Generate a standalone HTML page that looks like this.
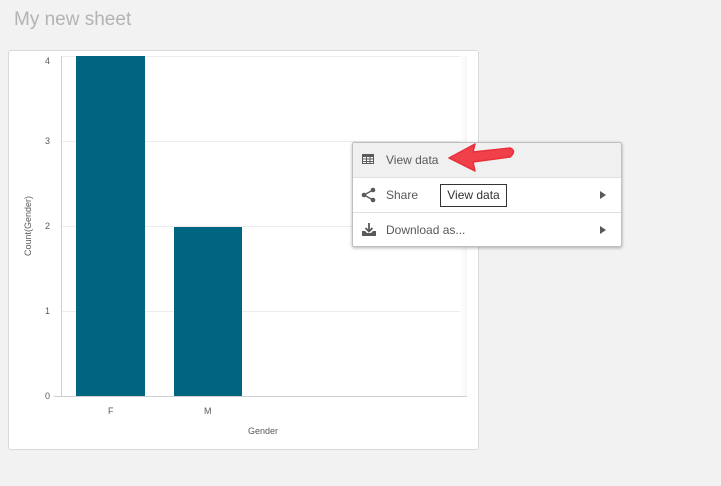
<!DOCTYPE html>
<html><head><style>
*{margin:0;padding:0;box-sizing:border-box}
body{width:721px;height:486px;background:#f2f2f2;font-family:"Liberation Sans",sans-serif;position:relative;overflow:hidden}
.t{position:absolute;left:14px;top:9px;font-size:19px;color:#b3b3b3}
.card{position:absolute;left:8px;top:50px;width:471px;height:400px;background:#fff;border:1px solid #d9d9d9;border-radius:3px}
.a{position:absolute;font-size:9px;color:#595959}
.g{position:absolute;left:61px;width:406px;height:1px;background:#ececec}
.bar{position:absolute;background:#006580}
.menu{position:absolute;left:352px;top:142px;width:270px;height:105px;background:#fff;border:1px solid #bfbfbf;border-radius:2px;box-shadow:0 1px 3px rgba(0,0,0,.3)}
.row{position:absolute;left:0;width:268px;height:34px;font-size:12px;color:#595959;line-height:34px;padding-left:33px}
.row.s{border-top:1px solid #e0e0e0}
.tri{position:absolute;right:15px;top:13px;width:0;height:0;border-left:6px solid #595959;border-top:4px solid transparent;border-bottom:4px solid transparent}
.ic{position:absolute;left:8px;top:9px}
</style></head><body>
<div class="t">My new sheet</div>
<div class="card"></div>
<div class="g" style="top:56px"></div>
<div class="g" style="top:141px"></div>
<div class="g" style="top:226px"></div>
<div class="g" style="top:311px"></div>
<div style="position:absolute;left:460px;top:56px;width:7px;height:340px;background:linear-gradient(90deg,#fff,#f6f6f6)"></div>
<div style="position:absolute;left:61px;top:56px;width:1px;height:341px;background:#d0d0d0"></div>
<div style="position:absolute;left:54px;top:396px;width:413px;height:1px;background:#d0d0d0"></div>
<div class="bar" style="left:76px;top:56px;width:69px;height:340px"></div>
<div class="bar" style="left:174px;top:227px;width:68px;height:169px"></div>
<div class="a" style="left:45px;top:56px">4</div>
<div class="a" style="left:45px;top:136px">3</div>
<div class="a" style="left:45px;top:221px">2</div>
<div class="a" style="left:45px;top:306px">1</div>
<div class="a" style="left:45px;top:391px">0</div>
<div class="a" style="left:108px;top:406px">F</div>
<div class="a" style="left:204px;top:406px">M</div>
<div class="a" style="left:248px;top:426px">Gender</div>
<div class="a" style="left:-4px;top:221px;transform:rotate(-90deg);width:64px;text-align:center">Count(Gender)</div>
<div class="menu">
<div class="row" style="top:0;background:#f0f0f0">View data
<svg class="ic" width="14" height="14" viewBox="0 0 14 14"><rect x="1" y="2" width="12" height="10" fill="#595959"/><g fill="#fff"><rect x="2" y="5" width="3" height="1.5"/><rect x="6" y="5" width="2.5" height="1.5"/><rect x="9.5" y="5" width="2.5" height="1.5"/><rect x="2" y="7.5" width="3" height="1.5"/><rect x="6" y="7.5" width="2.5" height="1.5"/><rect x="9.5" y="7.5" width="2.5" height="1.5"/><rect x="2" y="10" width="3" height="1"/><rect x="6" y="10" width="2.5" height="1"/><rect x="9.5" y="10" width="2.5" height="1"/></g></svg></div>
<div class="row s" style="top:34px">Share<div class="tri"></div>
<svg class="ic" width="16" height="16" viewBox="0 0 16 16"><circle cx="12" cy="3" r="2.3" fill="#595959"/><circle cx="3" cy="8" r="2.3" fill="#595959"/><circle cx="12" cy="13" r="2.3" fill="#595959"/><path d="M12 3L3 8L12 13" stroke="#595959" stroke-width="1.3" fill="none"/></svg></div>
<div class="row s" style="top:69px">Download as...<div class="tri"></div>
<svg class="ic" width="16" height="16" viewBox="0 0 16 16"><path d="M8 1v8M4.5 6L8 9.5L11.5 6" stroke="#595959" stroke-width="1.8" fill="none"/><path d="M1 9v5h14V9h-3l-2 2H6L4 9z" fill="#595959"/></svg></div>
</div>
<div style="position:absolute;left:440px;top:184px;width:67px;height:23px;border:1px solid #333;background:#fff;font-size:12px;color:#333;line-height:21px;text-align:center">View data</div>
<svg style="position:absolute;left:440px;top:138px" width="80" height="40" viewBox="0 0 80 40"><path d="M9 20L35 6L33 14L70 10Q77 13 70 19L33 24L35 33Z" fill="#f0404a" stroke="#e8303a" stroke-width="1.5" stroke-linejoin="round"/></svg>
</body></html>
